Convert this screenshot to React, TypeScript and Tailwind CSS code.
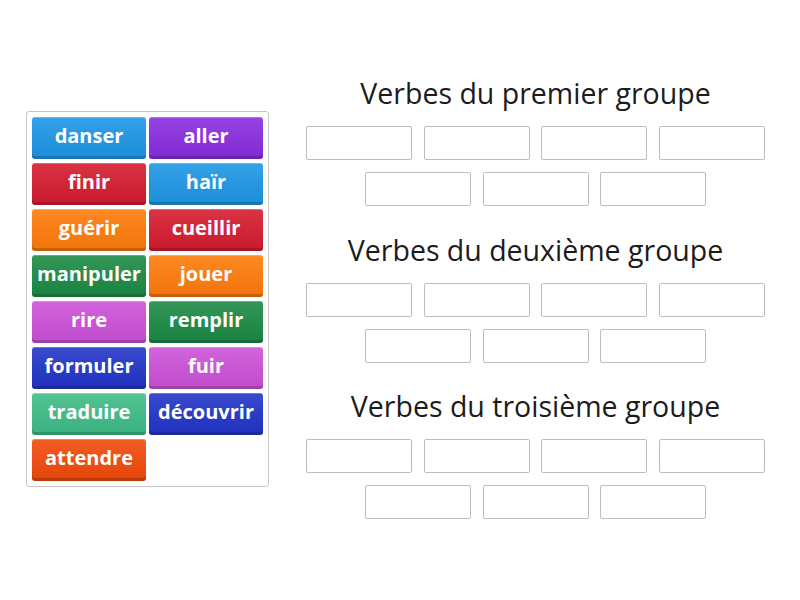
const tiles: { word: string; color: string }[] = [
  { word: "danser", color: "bg-[#1f97e6]" },
  { word: "aller", color: "bg-[#8a2ee0]" },
  { word: "finir", color: "bg-[#d61d30]" },
  { word: "haïr", color: "bg-[#1f97e6]" },
  { word: "guérir", color: "bg-[#ff7c0c]" },
  { word: "cueillir", color: "bg-[#d61d30]" },
  { word: "manipuler", color: "bg-[#1d8b46]" },
  { word: "jouer", color: "bg-[#ff7c0c]" },
  { word: "rire", color: "bg-[#cd52d9]" },
  { word: "remplir", color: "bg-[#1d8b46]" },
  { word: "formuler", color: "bg-[#2336c9]" },
  { word: "fuir", color: "bg-[#cd52d9]" },
  { word: "traduire", color: "bg-[#40bd89]" },
  { word: "découvrir", color: "bg-[#2336c9]" },
  { word: "attendre", color: "bg-[#f24b0c]" },
];

const groups = [
  "Verbes du premier groupe",
  "Verbes du deuxième groupe",
  "Verbes du troisième groupe",
];

const Tile = ({ word, color }: { word: string; color: string }) => (
  <div
    className={`${color} relative flex h-[42px] items-center justify-center overflow-hidden rounded-[3px] pb-1 text-[20px] font-bold text-white shadow-[inset_0_-3px_0_rgba(0,0,0,0.18),inset_0_1px_0_rgba(255,255,255,0.25)]`}
  >
    <div className="absolute inset-0 bg-gradient-to-b from-white/10 to-black/5"></div>
    <span className="relative leading-none">{word}</span>
  </div>
);

const Box = () => (
  <div className="h-[34px] w-[106px] rounded-[2px] border border-[#bdbdbd] bg-white"></div>
);

const Group = ({ title }: { title: string }) => (
  <div className="flex flex-col items-center">
    <h2 className="mb-[18px] h-[30px] text-[28.5px] leading-[30px] font-normal whitespace-nowrap text-[#1c1c1c]">
      {title}
    </h2>
    <div className="flex flex-col items-center gap-3">
      <div className="flex gap-[11.5px]">
        <Box />
        <Box />
        <Box />
        <Box />
      </div>
      <div className="flex gap-[11.5px]">
        <Box />
        <Box />
        <Box />
      </div>
    </div>
  </div>
);

export default function App() {
  return (
    <div
      className="flex h-[600px] w-[800px] bg-white pl-[26px]"
      style={{ fontFamily: '"Open Sans", "Noto Sans", sans-serif' }}
    >
      <div className="mt-[111px] self-start rounded-[3px] border border-[#c6c6c6] p-[5px]">
        <div className="grid grid-cols-[114px_114px] gap-x-[3px] gap-y-[4px]">
          {tiles.map((t) => (
            <Tile key={t.word} word={t.word} color={t.color} />
          ))}
        </div>
      </div>
      <div className="mt-[78px] ml-[37px] flex w-[459px] flex-col gap-[28.5px]">
        {groups.map((g) => (
          <Group key={g} title={g} />
        ))}
      </div>
    </div>
  );
}
